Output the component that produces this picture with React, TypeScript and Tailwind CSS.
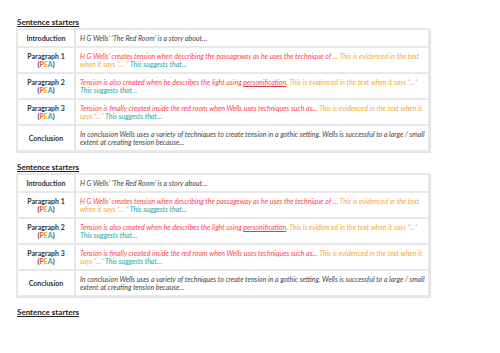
import React from "react";

const R = "text-[#ff3d4f]";
const O = "text-[#f7a830]";
const T = "text-[#25a6a6]";

function Pea() {
  return (
    <span>
      (<span className={R}>P</span>
      <span className={O}>E</span>
      <span className={T}>A</span>)
    </span>
  );
}

function Row({ label, pea, children, h }: { label: string; pea?: boolean; children: React.ReactNode; h: string }) {
  return (
    <tr className={`${h} border-b-2 border-[#e8e8e8]`}>
      <td className="w-[58px] border-r-2 border-[#e8e8e8] text-center align-middle font-bold text-[#333] leading-[8px]">
        <div>{label}</div>
        {pea && <Pea />}
      </td>
      <td className="pl-[4px] pr-[2px] align-middle italic leading-[8px]">{children}</td>
    </tr>
  );
}

function StarterTable() {
  return (
    <table className="w-[414px] border-collapse border-2 border-[#e8e8e8] shadow-[1px_1px_0_#e0e0e0] text-[7px]">
      <tbody>
        <Row label="Introduction" h="h-[18px]">
          <span className="text-[#444]">H G Wells’ ‘The Red Room’ is a story about…</span>
        </Row>
        <Row label="Paragraph 1" pea h="h-[26px]">
          <span className={R}>H G Wells’ creates tension when describing the passageway as he uses the technique of … </span>
          <span className={O}>This is evidenced in the text when it says “… ” </span>
          <span className={T}>This suggests that…</span>
        </Row>
        <Row label="Paragraph 2" pea h="h-[26px]">
          <span className={R}>
            Tension is also created when he describes the light using{" "}
            <span className="underline decoration-[#d04050]">personification</span>.{" "}
          </span>
          <span className={O}>This is evidenced in the text when it says “…” </span>
          <span className={T}>This suggests that…</span>
        </Row>
        <Row label="Paragraph 3" pea h="h-[26px]">
          <span className={R}>Tension is finally created inside the red room when Wells uses techniques such as… </span>
          <span className={O}>This is evidenced in the text when it says “…” </span>
          <span className={T}>This suggests that…</span>
        </Row>
        <Row label="Conclusion" h="h-[26px]">
          <span className="text-[#444]">
            In conclusion Wells uses a variety of techniques to create tension in a gothic setting. Wells is successful to a large / small extent at creating tension because…
          </span>
        </Row>
      </tbody>
    </table>
  );
}

function Heading() {
  return <h2 className="text-[8px] font-bold underline text-[#222] leading-[10px] pl-[1px]">Sentence starters</h2>;
}

export default function App() {
  return (
    <div className="w-[500px] h-[353px] bg-white px-[16px] pt-[17px] font-['Lato',sans-serif]">
      <div className="flex flex-col gap-[1px]">
        <Heading />
        <StarterTable />
      </div>
      <div className="flex flex-col gap-[1px] mt-[10px]">
        <Heading />
        <StarterTable />
      </div>
      <div className="mt-[10px]">
        <Heading />
      </div>
    </div>
  );
}
